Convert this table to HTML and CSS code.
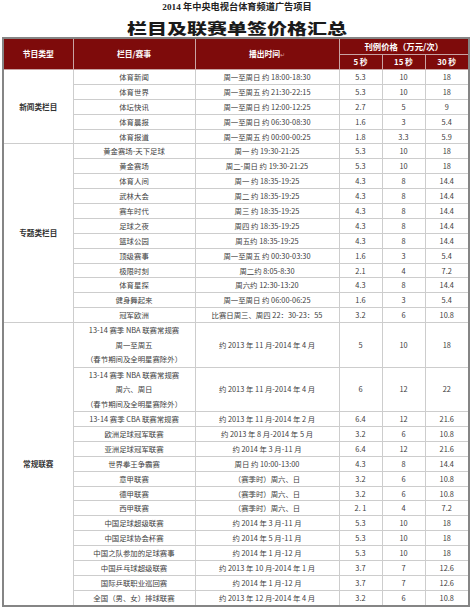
FILE: index.html
```html
<!DOCTYPE html>
<html lang="zh">
<head>
<meta charset="utf-8">
<title>栏目及联赛单签价格汇总</title>
<link rel="stylesheet" href="styles.css">
</head>
<body>
<div class="head">
  <div class="sub">2014 年中央电视台体育频道广告项目</div>
  <div class="title"><span>栏目及联赛单签价格汇总</span></div>
</div>
<div class="frame">
<table class="price">
  <colgroup>
    <col class="c1"><col class="c2"><col class="c3"><col class="c4"><col class="c5"><col class="c6">
  </colgroup>
  <thead>
    <tr class="h1">
      <th rowspan="2">节目类型</th>
      <th rowspan="2">栏目/赛事</th>
      <th rowspan="2">播出时间<span class="mark">↵</span></th>
      <th colspan="3" class="group">刊例价格（万元/次）</th>
    </tr>
    <tr class="h2">
      <th>5 秒</th><th>15 秒</th><th>30 秒</th>
    </tr>
  </thead>
  <tbody>
    <tr><td rowspan="5" class="cat">新闻类栏目</td><td>体育新闻</td><td class="time">周一至周日 约 18:00-18:30</td><td>5.3</td><td>10</td><td>18</td></tr>
    <tr><td>体育世界</td><td class="time">周一至周五 约 21:30-22:15</td><td>5.3</td><td>10</td><td>18</td></tr>
    <tr><td>体坛快讯</td><td class="time">周一至周日 约 12:00-12:25</td><td>2.7</td><td>5</td><td>9</td></tr>
    <tr><td>体育晨报</td><td class="time">周一至周日 约 06:30-08:30</td><td>1.6</td><td>3</td><td>5.4</td></tr>
    <tr><td>体育报道</td><td class="time">周一至周五 约 00:00-00:25</td><td>1.8</td><td>3.3</td><td>5.9</td></tr>

    <tr><td rowspan="12" class="cat">专题类栏目</td><td>黄金赛场-天下足球</td><td>周一 约 19:30-21:25</td><td>5.3</td><td>10</td><td>18</td></tr>
    <tr><td>黄金赛场</td><td>周二-周日 约 19:30-21:25</td><td>5.3</td><td>10</td><td>18</td></tr>
    <tr><td>体育人间</td><td>周一 约 18:35-19:25</td><td>4.3</td><td>8</td><td>14.4</td></tr>
    <tr><td>武林大会</td><td>周二 约 18:35-19:25</td><td>4.3</td><td>8</td><td>14.4</td></tr>
    <tr><td>赛车时代</td><td>周三 约 18:35-19:25</td><td>4.3</td><td>8</td><td>14.4</td></tr>
    <tr><td>足球之夜</td><td>周四 约 18:35-19:25</td><td>4.3</td><td>8</td><td>14.4</td></tr>
    <tr><td>篮球公园</td><td>周五约 18:35-19:25</td><td>4.3</td><td>8</td><td>14.4</td></tr>
    <tr><td>顶级赛事</td><td>周一至周五 约 00:30-03:30</td><td>1.6</td><td>3</td><td>5.4</td></tr>
    <tr><td>极限时刻</td><td>周二约 8:05-8:30</td><td>2.1</td><td>4</td><td>7.2</td></tr>
    <tr><td>体育星探</td><td>周六约 12:30-13:20</td><td>4.3</td><td>8</td><td>14.4</td></tr>
    <tr><td>健身舞起来</td><td>周一至周日 约 06:00-06:25</td><td>1.6</td><td>3</td><td>5.4</td></tr>
    <tr><td>冠军欧洲</td><td>比赛日周三、周四 22：30-23：55</td><td>3.2</td><td>6</td><td>10.8</td></tr>

    <tr class="tall"><td rowspan="15" class="cat">常规联赛</td><td>13-14 赛季 NBA 联赛常规赛<br>周一至周五<br>（春节期间及全明星赛除外）</td><td>约 2013 年 11 月-2014 年 4 月</td><td>5</td><td>10</td><td>18</td></tr>
    <tr class="tall"><td>13-14 赛季 NBA 联赛常规赛<br>周六、周日<br>（春节期间及全明星赛除外）</td><td>约 2013 年 11 月-2014 年 4 月</td><td>6</td><td>12</td><td>22</td></tr>
    <tr><td>13-14 赛季 CBA 联赛常规赛</td><td>约 2013 年 11 月-2014 年 2 月</td><td>6.4</td><td>12</td><td>21.6</td></tr>
    <tr><td>欧洲足球冠军联赛</td><td>约 2013 年 8 月-2014 年 5 月</td><td>3.2</td><td>6</td><td>10.8</td></tr>
    <tr><td>亚洲足球冠军联赛</td><td>约 2014 年 3 月-11 月</td><td>6.4</td><td>12</td><td>21.6</td></tr>
    <tr><td>世界拳王争霸赛</td><td>周日 约 10:00-13:00</td><td>4.3</td><td>8</td><td>14.4</td></tr>
    <tr><td>意甲联赛</td><td>（赛季时）周六、日</td><td>3.2</td><td>6</td><td>10.8</td></tr>
    <tr><td>德甲联赛</td><td>（赛季时）周六、日</td><td>3.2</td><td>6</td><td>10.8</td></tr>
    <tr><td>西甲联赛</td><td>（赛季时）周六、日</td><td>2. 1</td><td>4</td><td>7.2</td></tr>
    <tr><td>中国足球超级联赛</td><td>约 2014 年 3 月-11 月</td><td>5.3</td><td>10</td><td>18</td></tr>
    <tr><td>中国足球协会杯赛</td><td>约 2014 年 5 月-11 月</td><td>5.3</td><td>10</td><td>18</td></tr>
    <tr><td>中国之队参加的足球赛事</td><td>约 2014 年 1 月-12 月</td><td>5.3</td><td>10</td><td>18</td></tr>
    <tr><td>中国乒乓球超级联赛</td><td>约 2013 年 10 月-2014 年 1 月</td><td>3.7</td><td>7</td><td>12.6</td></tr>
    <tr><td>国际乒联职业巡回赛</td><td>约 2014 年 1 月-12 月</td><td>3.7</td><td>7</td><td>12.6</td></tr>
    <tr><td>全国（男、女）排球联赛</td><td>约 2013 年 12 月-2014 年 4 月</td><td>3.2</td><td>6</td><td>10.8</td></tr>
  </tbody>
</table>
</div>
</body>
</html>
```
FILE: styles.css
```css
html, body {
  margin: 0;
  padding: 0;
  background: #ffffff;
}
body {
  font-family: "Noto Sans CJK SC", "Noto Sans", sans-serif;
  color: #3c3c3c;
}
.head {
  height: 37px;
  text-align: center;
}
.sub {
  font-family: "Liberation Serif", "Noto Sans CJK SC", serif;
  font-weight: bold;
  font-size: 9.2px;
  line-height: 14px;
  color: #222;
}
.title {
  height: 23px;
  line-height: 23px;
  font-size: 20px;
  font-weight: 900;
  color: #1a1a1a;
}
.title span {
  display: inline-block;
  transform: translateY(2px) scaleY(0.72);
}
.frame {
  margin-left: 2px;
  width: 464px;
  border: 2px solid #858585;
}
.price {
  width: 464px;
  border-collapse: collapse;
  table-layout: fixed;
  border-style: hidden;
}
.c1 { width: 69px; }
.c2 { width: 122px; }
.c3 { width: 144px; }
.c4 { width: 43px; }
.c5 { width: 43px; }
.c6 { width: 43px; }
.price th,
.price td {
  padding: 0;
  text-align: center;
  vertical-align: middle;
  white-space: nowrap;
  overflow: hidden;
}
.price th {
  background: #7e0b0b;
  color: #ffffff;
  font-weight: bold;
  font-size: 7.8px;
  line-height: 12px;
  border: 1px solid #c9a3a3;
  height: 14.5px;
}
.price th.group {
  font-size: 8.4px;
}
.mark {
  font-weight: normal;
  color: #d99;
  font-size: 6px;
}
.price td {
  font-size: 7.4px;
  height: 13.9px;
  line-height: 12px;
  border: 1px solid #cdcdcd;
  color: #404040;
}
.price td.cat {
  font-weight: bold;
  font-size: 7.6px;
  color: #333;
}
.price tr.tall td {
  height: 42.5px;
  line-height: 14.5px;
}
```
